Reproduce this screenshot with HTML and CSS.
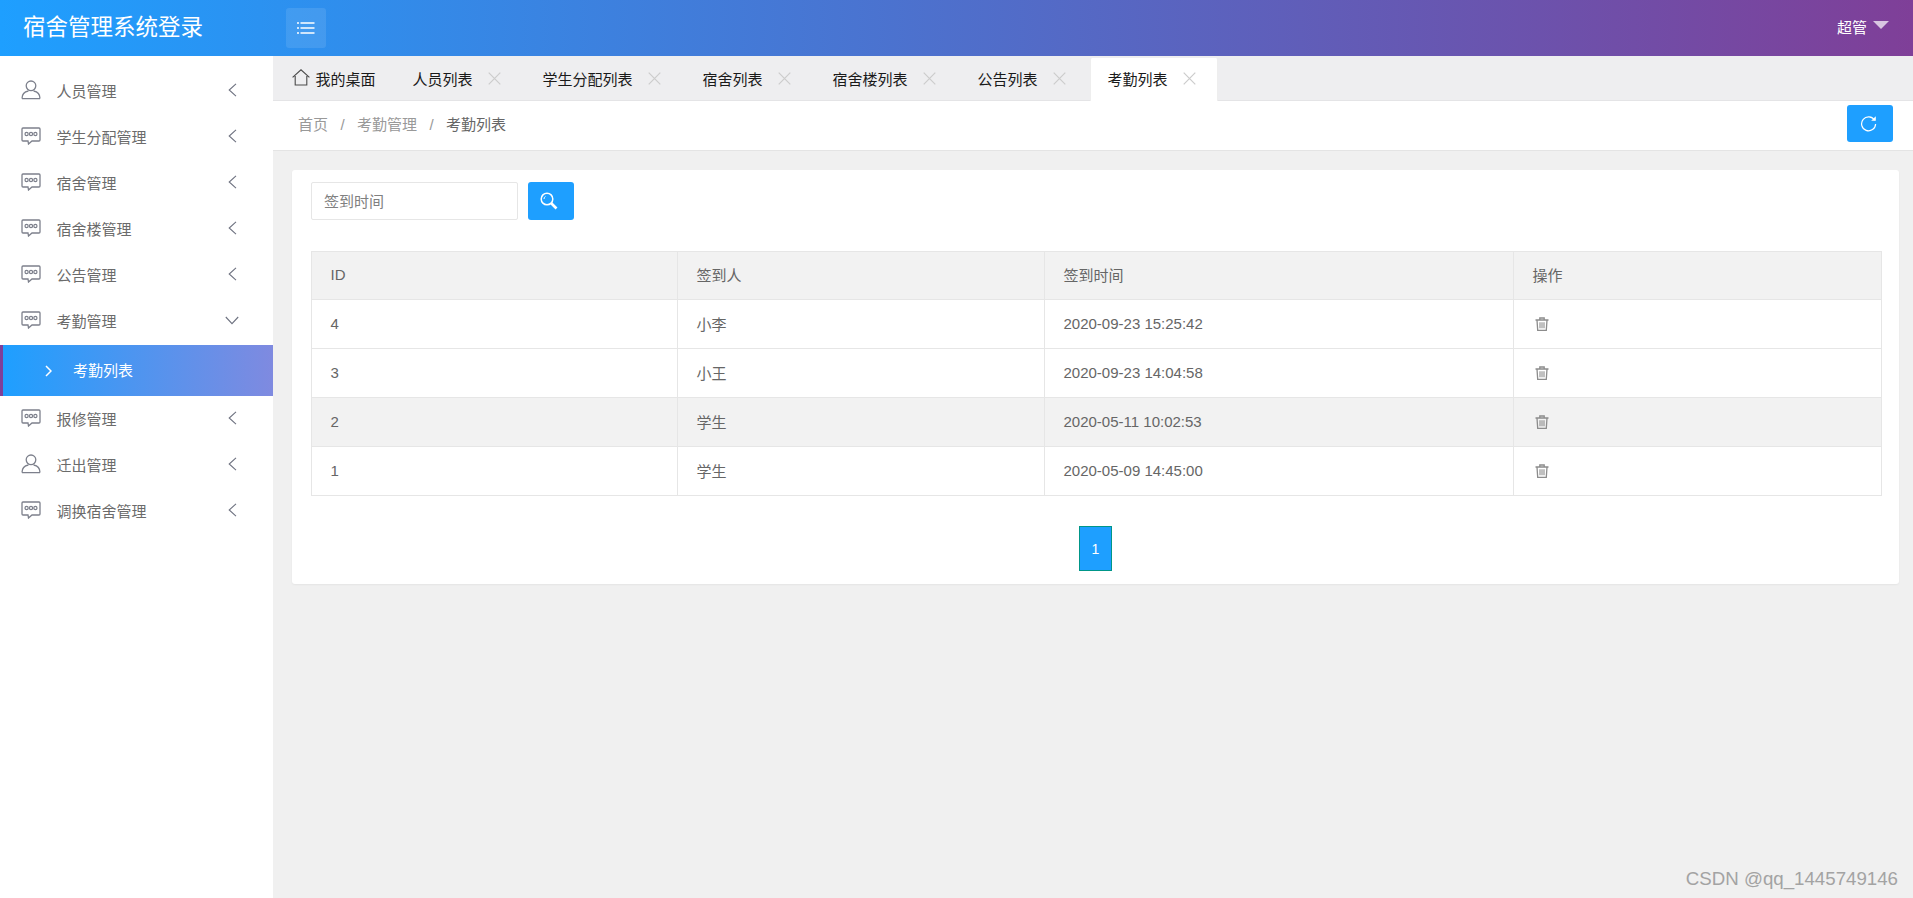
FILE: index.html
```html
<!DOCTYPE html>
<html lang="zh-CN">
<head>
<meta charset="utf-8">
<title>宿舍管理系统登录</title>
<link rel="stylesheet" href="styles.css">
</head>
<body>
<svg class="defs" width="0" height="0" aria-hidden="true">
  <symbol id="i-user" viewBox="0 0 20 20"><circle cx="10" cy="5.8" r="4.8" fill="none" stroke="currentColor" stroke-width="1.3"/><path d="M1 18.6c0-4.6 3.2-7 6.4-7.6M19 18.6c0-4.6-3.2-7-6.4-7.6M1 18.6h18" fill="none" stroke="currentColor" stroke-width="1.3"/></symbol>
  <symbol id="i-chat" viewBox="0 0 20 18"><path d="M2 1h16a1 1 0 0 1 1 1v11a1 1 0 0 1-1 1H11l-3.5 3-.5-3H2a1 1 0 0 1-1-1V2a1 1 0 0 1 1-1z" fill="none" stroke="currentColor" stroke-width="1.3"/><circle cx="5.6" cy="7" r="1.6" fill="none" stroke="currentColor" stroke-width="1.2"/><circle cx="10" cy="7" r="1.6" fill="none" stroke="currentColor" stroke-width="1.2"/><circle cx="14.4" cy="7" r="1.6" fill="none" stroke="currentColor" stroke-width="1.2"/></symbol>
  <symbol id="i-left" viewBox="0 0 9 14"><path d="M8 .8 1.2 7 8 13.2" fill="none" stroke="currentColor" stroke-width="1.1"/></symbol>
  <symbol id="i-close" viewBox="0 0 13 13"><path d="m.7.7 11.6 11.6M12.3.7.7 12.3" fill="none" stroke="currentColor" stroke-width="1.2"/></symbol>
  <symbol id="i-trash" viewBox="0 0 14 14"><path d="M.5 3h13M4.8 3V1h4.4v2M2 3l.7 10.3h8.6L12 3" fill="none" stroke="currentColor" stroke-width="1.3"/><path d="M5 5.2v6M7 5.2v6M9 5.2v6" stroke="currentColor" stroke-width="1.1"/></symbol>
</svg>

<header class="topbar">
  <div class="brand">宿舍管理系统登录</div>
  <button class="menu-toggle" type="button" aria-label="菜单">
    <svg width="18" height="12" viewBox="0 0 18 12"><path d="M3.5 1h14M3.5 6h14M3.5 11h14" stroke="#fff" stroke-width="1.3"/><path d="M0 1h2M0 6h2M0 11h2" stroke="#fff" stroke-width="1.3"/></svg>
  </button>
  <div class="account"><span>超管</span><i class="caret"></i></div>
</header>

<div class="frame">
  <nav class="sidebar">
    <ul class="menu">
      <li class="menu-item"><svg class="mi mi-user"><use href="#i-user"/></svg><span class="mt">人员管理</span><svg class="chev"><use href="#i-left"/></svg></li>
      <li class="menu-item"><svg class="mi"><use href="#i-chat"/></svg><span class="mt">学生分配管理</span><svg class="chev"><use href="#i-left"/></svg></li>
      <li class="menu-item"><svg class="mi"><use href="#i-chat"/></svg><span class="mt">宿舍管理</span><svg class="chev"><use href="#i-left"/></svg></li>
      <li class="menu-item"><svg class="mi"><use href="#i-chat"/></svg><span class="mt">宿舍楼管理</span><svg class="chev"><use href="#i-left"/></svg></li>
      <li class="menu-item"><svg class="mi"><use href="#i-chat"/></svg><span class="mt">公告管理</span><svg class="chev"><use href="#i-left"/></svg></li>
      <li class="menu-item"><svg class="mi"><use href="#i-chat"/></svg><span class="mt">考勤管理</span><svg class="chev-down" viewBox="0 0 14 9"><path d="M.8 1 7 7.6 13.2 1" fill="none" stroke="currentColor" stroke-width="1.1"/></svg></li>
      <li class="menu-sub"><svg class="sub-chev" viewBox="0 0 7 12"><path d="M1 1l5 5-5 5" fill="none" stroke="#fff" stroke-width="1.5"/></svg><span>考勤列表</span></li>
      <li class="menu-item"><svg class="mi"><use href="#i-chat"/></svg><span class="mt">报修管理</span><svg class="chev"><use href="#i-left"/></svg></li>
      <li class="menu-item"><svg class="mi mi-user"><use href="#i-user"/></svg><span class="mt">迁出管理</span><svg class="chev"><use href="#i-left"/></svg></li>
      <li class="menu-item"><svg class="mi"><use href="#i-chat"/></svg><span class="mt">调换宿舍管理</span><svg class="chev"><use href="#i-left"/></svg></li>
    </ul>
  </nav>

  <main class="main">
    <div class="tabs">
      <div class="tab tab-home">
        <svg class="home" viewBox="0 0 18 17"><path d="M.6 8.4 9 .8l8.4 7.6M3.2 7v9h11.6V7" fill="none" stroke="#4a4a4a" stroke-width="1.1"/></svg>
        <span>我的桌面</span>
      </div>
      <div class="tab"><span>人员列表</span><svg class="x"><use href="#i-close"/></svg></div>
      <div class="tab"><span>学生分配列表</span><svg class="x"><use href="#i-close"/></svg></div>
      <div class="tab"><span>宿舍列表</span><svg class="x"><use href="#i-close"/></svg></div>
      <div class="tab"><span>宿舍楼列表</span><svg class="x"><use href="#i-close"/></svg></div>
      <div class="tab"><span>公告列表</span><svg class="x"><use href="#i-close"/></svg></div>
      <div class="tab tab-active"><span>考勤列表</span><svg class="x"><use href="#i-close"/></svg></div>
    </div>

    <div class="crumbbar">
      <div class="crumbs">
        <a>首页</a><i>/</i><a>考勤管理</a><i>/</i><b>考勤列表</b>
      </div>
      <button class="btn btn-refresh" type="button" aria-label="刷新">
        <svg width="17" height="17" viewBox="0 0 17 17"><path d="M14.6 5.2A7 7 0 1 0 15.6 9" fill="none" stroke="#fff" stroke-width="1.2"/><path d="M15.8 1.2v4.6h-4.6z" fill="#fff"/></svg>
      </button>
    </div>

    <section class="content">
      <div class="card">
        <form class="filter">
          <input class="field" type="text" placeholder="签到时间">
          <button class="btn btn-search" type="button" aria-label="搜索">
            <svg width="18" height="18" viewBox="0 0 18 18"><circle cx="7" cy="7" r="5.8" fill="none" stroke="#fff" stroke-width="1.5"/><path d="M4 7a3 3 0 0 1 1.5-2.6" fill="none" stroke="#fff"/><path d="m11 11 5.5 5.5" stroke="#fff" stroke-width="2.6"/></svg>
          </button>
        </form>
        <table class="grid">
          <colgroup><col class="c1"><col class="c2"><col class="c3"><col class="c4"></colgroup>
          <thead><tr><th>ID</th><th>签到人</th><th>签到时间</th><th>操作</th></tr></thead>
          <tbody>
            <tr><td>4</td><td>小李</td><td>2020-09-23 15:25:42</td><td><svg class="trash"><use href="#i-trash"/></svg></td></tr>
            <tr><td>3</td><td>小王</td><td>2020-09-23 14:04:58</td><td><svg class="trash"><use href="#i-trash"/></svg></td></tr>
            <tr class="hover"><td>2</td><td>学生</td><td>2020-05-11 10:02:53</td><td><svg class="trash"><use href="#i-trash"/></svg></td></tr>
            <tr><td>1</td><td>学生</td><td>2020-05-09 14:45:00</td><td><svg class="trash"><use href="#i-trash"/></svg></td></tr>
          </tbody>
        </table>
        <div class="pager"><span class="page-current">1</span></div>
      </div>
    </section>
  </main>
</div>
<div class="watermark">CSDN @qq_1445749146</div>
</body>
</html>
```

FILE: styles.css
```css
* { box-sizing: border-box; }
html, body { margin: 0; height: 100%; overflow: hidden; }
body {
  display: flex;
  flex-direction: column;
  font-family: "Liberation Sans", "Noto Sans CJK SC", sans-serif;
  font-size: 15px;
  color: #666;
  background: #f0f0f0;
}
.defs { position: absolute; }
ul { list-style: none; margin: 0; padding: 0; }

.topbar {
  height: 56px;
  flex: none;
  display: flex;
  align-items: center;
  background: linear-gradient(to right, #1e9fff, #7f3f98);
  color: #fff;
}
.brand { width: 286px; padding-left: 23px; font-size: 22.5px; line-height: 56px; }
.menu-toggle {
  width: 40px; height: 40px;
  border: 0; border-radius: 3px; padding: 0;
  display: flex; align-items: center; justify-content: center;
  background: rgba(255, 255, 255, .1);
}
.account { margin-left: auto; margin-right: 24px; display: flex; align-items: flex-start; height: 20px; color: #fff; font-size: 15px; line-height: 20px; }
.caret {
  width: 0; height: 0;
  margin: 3px 0 0 6px;
  border-left: 8px solid transparent;
  border-right: 8px solid transparent;
  border-top: 8px solid rgba(255, 255, 255, .7);
}

.frame { flex: 1; display: flex; min-height: 0; }
.sidebar { width: 273px; flex: none; background: #fff; padding-top: 12px; }
.menu-item { height: 46px; display: flex; align-items: center; padding-left: 21px; position: relative; color: #6b6b6b; }
.mi { width: 20px; height: 18px; color: #7d808c; margin-top: -3px; flex: none; }
.mi-user { height: 20px; }
.mt { margin-left: 15.5px; line-height: 20px; margin-top: 2px; }
.chev { position: absolute; left: 228px; top: 15px; width: 9px; height: 14px; color: #6e7280; }
.chev-down { position: absolute; left: 225px; top: 18px; width: 14px; height: 9px; color: #6e7280; }
.menu-sub {
  height: 51px; margin-top: 1px;
  display: flex; align-items: center;
  padding-left: 42px;
  color: #fff;
  border-left: 3px solid #7f3f98;
  background: linear-gradient(to right, #1e9fff, #7f8ae0);
}
.sub-chev { width: 7px; height: 12px; flex: none; margin-right: 21px; }
.menu-sub span { margin-top: -2px; }

.main { flex: 1; min-width: 0; display: flex; flex-direction: column; }
.tabs {
  height: 45px; flex: none;
  display: flex; gap: 2px;
  padding: 2px 0 0 1px;
  background: #eeeef0;
  border-bottom: 1px solid #e4e4e6;
  color: #1a1a1a;
}
.tab { height: 40px; display: flex; align-items: center; padding: 0 22px 0 18px; border-radius: 2px 2px 0 0; }
.tab-home { padding-right: 17px; padding-left: 17.5px; }
.tab-active { background: #fff; height: 43px; border: 1px solid #eee; border-top: 0; border-bottom: 0; padding: 0 21px 3px 17px; position: relative; z-index: 1; }
.home { width: 18px; height: 17px; margin-right: 6px; margin-top: -2px; flex: none; }
.x { width: 13px; height: 13px; margin-left: 15px; color: #ccc; flex: none; }

.crumbbar {
  height: 50px; flex: none;
  display: flex; align-items: center; justify-content: space-between;
  padding: 0 20px 0 25px;
  background: #fff;
  border-bottom: 1px solid #e4e4e4;
}
.crumbs { display: flex; color: #999; line-height: 20px; margin-top: -2px; }
.crumbs i { font-style: normal; width: 29px; text-align: center; color: #999; }
.crumbs b { font-weight: 400; color: #666; }
.btn { border: 0; border-radius: 3px; padding: 0; background: #1e9fff; display: flex; align-items: center; justify-content: center; }
.btn-refresh { width: 46px; height: 37px; margin-top: -5px; padding-right: 4px; }

.content { flex: 1; padding: 19px 14px 0 19px; }
.card { background: #fff; border-radius: 3px; padding: 12px 17px 13px 19px; box-shadow: 0 1px 2px rgba(0,0,0,.05); }
.filter { display: flex; gap: 10px; margin: 0; }
.field {
  width: 207px; height: 38px;
  padding: 0 12px;
  border: 1px solid #e6e6e6; border-radius: 2px;
  font: inherit; color: #666;
  outline: 0; background: #fff;
}
.field::placeholder { color: #808080; opacity: 1; }
.btn-search { width: 46px; height: 38px; padding-right: 4px; }

.grid { width: 100%; margin-top: 31px; border-collapse: collapse; table-layout: fixed; }
.c1 { width: 366px; } .c2 { width: 367px; } .c3 { width: 469px; }
.grid th, .grid td { border: 1px solid #e6e6e6; padding: 0 18.5px 2px; text-align: left; font-weight: 400; color: #666; }
.grid th { height: 48px; background: #f2f2f2; }
.grid td { height: 49px; }
.hover td { background: #f2f2f2; }
.trash { width: 14px; height: 14px; color: #8c8c8c; display: block; margin-left: 2px; margin-top: 2px; }

.pager { display: flex; justify-content: center; margin-top: 30px; padding-right: 2px; }
.page-current {
  width: 33px; height: 45px;
  display: flex; align-items: center; justify-content: center;
  background: #1e9fff; border: 1px solid #009688;
  color: #fff; font-size: 14px;
}

.watermark {
  position: absolute; right: 15px; bottom: 9px;
  font-size: 18.7px; line-height: 20px;
  color: #a3a3a3;
}
```
